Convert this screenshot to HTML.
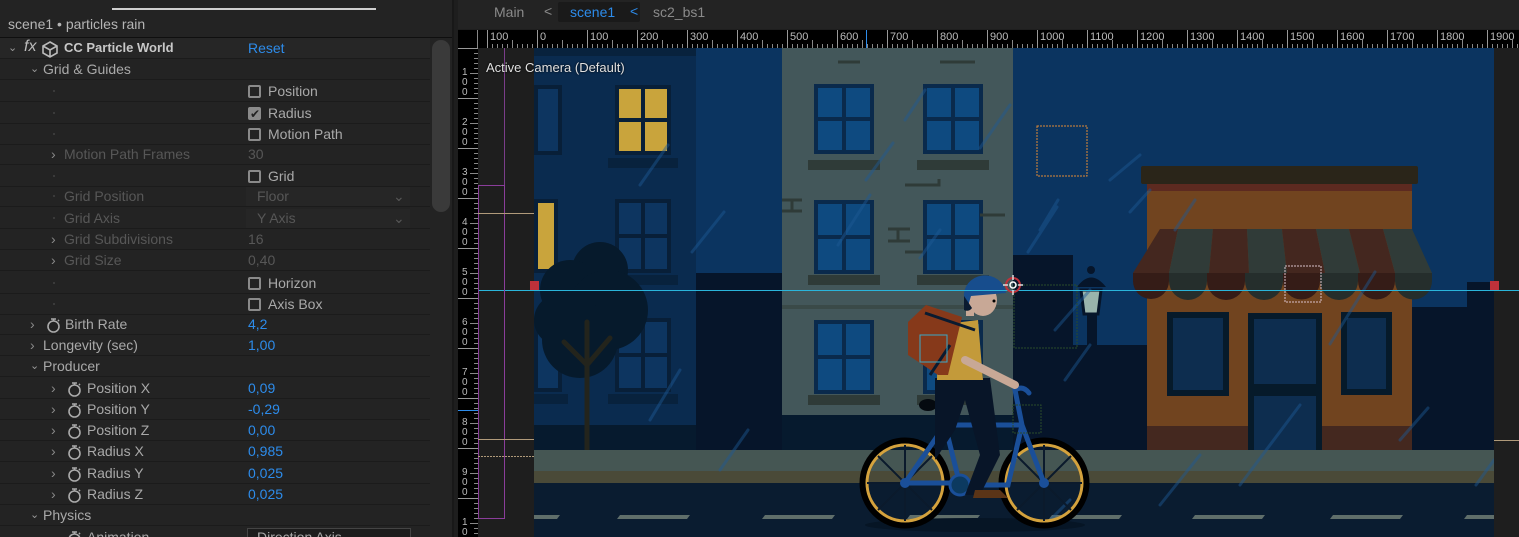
<!DOCTYPE html>
<html><head><meta charset="utf-8"><style>
*{margin:0;padding:0;box-sizing:border-box}
html{width:1519px;height:537px;overflow:hidden}
body{width:1519px;height:537px;overflow:hidden;background:#1e1e1e;font-family:"Liberation Sans","DejaVu Sans",sans-serif;position:relative}
#left{position:absolute;left:0;top:0;width:454px;height:537px;background:#232323;overflow:hidden}
.row{position:absolute;left:0;width:430px;height:21px;border-bottom:1px solid #1b1b1b;font-size:14px;color:#a9a9a9;line-height:20px}
.row span{position:absolute;white-space:nowrap}
.v{left:248px;color:#2d8ceb}
.dim{color:#575757}
.cb{position:absolute;left:248px;top:4px;width:13px;height:13px;border:2px solid #8a8a8a;border-radius:2px}
.dot{position:absolute;left:53px;top:9px;width:2px;height:2px;background:#3a3a3a}
.sw{position:absolute;top:3px;width:15px;height:16px}
.dd{position:absolute;left:246px;top:1px;width:164px;height:19px;background:#262626}
</style></head><body>
<div id="left">
<div style="position:absolute;left:112px;top:8px;width:264px;height:2px;background:#cfcfcf"></div>
<div style="position:absolute;left:8px;top:16px;font-size:14px;color:#b5b5b5">scene1 • particles rain</div>
<div style="position:absolute;left:0;top:37px;width:452px;height:1px;background:#0f0f0f"></div>
<div id="rows"></div>
<div style="position:absolute;left:432px;top:40px;width:18px;height:172px;background:#3a3a3a;border-radius:9px"></div>
<div style="position:absolute;left:452px;top:0;width:6px;height:537px;background:#181818"></div>
</div>

<div style="position:absolute;left:458px;top:0;width:1061px;height:29px;background:#232323"></div>
<div style="position:absolute;left:494px;top:4px;font-size:14px;color:#8a8a8a">Main</div>
<div style="position:absolute;left:544px;top:3px;font-size:14px;color:#8a8a8a">&lt;</div>
<div style="position:absolute;left:558px;top:2px;width:82px;height:20px;background:#1a1a1a;border-radius:2px"></div>
<div style="position:absolute;left:570px;top:4px;font-size:14px;color:#2d8ceb">scene1</div>
<div style="position:absolute;left:630px;top:3px;font-size:14px;color:#2d8ceb">&lt;</div>
<div style="position:absolute;left:653px;top:4px;font-size:14px;color:#8a8a8a">sc2_bs1</div>
<div id="hr" style="position:absolute;left:458px;top:30px;width:1061px;height:18px;background:#000;overflow:hidden"></div>
<div id="vr" style="position:absolute;left:458px;top:48px;width:20px;height:489px;background:#000;overflow:hidden"></div>

<svg style="position:absolute;left:0;top:0" width="1519" height="537" viewBox="0 0 1519 537">
<defs><clipPath id="sc"><rect x="534" y="48" width="960" height="489"/></clipPath></defs>
<g clip-path="url(#sc)">
<rect x="534" y="48" width="960" height="489" fill="#0b3460"/>
<rect x="534" y="48" width="162" height="405" fill="#0a2b4f"/>
<rect x="534" y="48" width="162" height="8" fill="#08223d"/>
<g fill="#0d3560" stroke="#081f38" stroke-width="4">
<rect x="617" y="87" width="52" height="66" fill="#c9a43c"/>
<rect x="536" y="87" width="24" height="66"/>
<rect x="536" y="201" width="20" height="70" fill="#c9a43c"/>
<rect x="617" y="201" width="52" height="70"/>
<rect x="617" y="320" width="52" height="70"/>
<rect x="536" y="320" width="24" height="70"/>
</g>
<line x1="643" y1="87" x2="643" y2="153" stroke="#081f38" stroke-width="4"/><line x1="617" y1="120" x2="669" y2="120" stroke="#081f38" stroke-width="4"/>
<line x1="643" y1="201" x2="643" y2="271" stroke="#081f38" stroke-width="4"/><line x1="617" y1="236" x2="669" y2="236" stroke="#081f38" stroke-width="4"/>
<line x1="643" y1="320" x2="643" y2="390" stroke="#081f38" stroke-width="4"/><line x1="617" y1="355" x2="669" y2="355" stroke="#081f38" stroke-width="4"/>
<g fill="#08223d"><rect x="608" y="158" width="70" height="10"/><rect x="608" y="275" width="70" height="10"/><rect x="608" y="394" width="70" height="10"/><rect x="534" y="394" width="34" height="10"/></g>
<rect x="534" y="425" width="162" height="28" fill="#061a2e"/>
<g fill="#061a2c"><circle cx="600" cy="270" r="28"/><circle cx="570" cy="290" r="30"/><circle cx="608" cy="310" r="40"/><circle cx="580" cy="340" r="38"/><circle cx="560" cy="320" r="26"/></g>
<g stroke="#23241c" stroke-width="5" fill="none" stroke-linecap="round"><path d="M587 322V460M564 342L587 365L610 338"/><path d="M564 462H612"/></g>
<rect x="696" y="273" width="86" height="180" fill="#06152a"/>
<rect x="782" y="48" width="231" height="405" fill="#43575a"/>
<rect x="782" y="415" width="231" height="38" fill="#061a2e"/>
<rect x="782" y="305" width="231" height="4" fill="#3a4a48"/>
<g fill="#0e4a80" stroke="#0a2a4c" stroke-width="4">
<rect x="816" y="86" width="56" height="66"/><rect x="925" y="86" width="56" height="66"/>
<rect x="816" y="202" width="56" height="70"/><rect x="925" y="202" width="56" height="70"/>
<rect x="816" y="322" width="56" height="70"/><rect x="925" y="322" width="56" height="70"/>
</g>
<g stroke="#0a2a4c" stroke-width="4"><path d="M844 86v66M816 119h56M953 86v66M925 119h56M844 202v70M816 237h56M953 202v70M925 237h56M844 322v70M816 357h56M953 322v70M925 357h56"/></g>
<g fill="#2f3b38"><rect x="808" y="160" width="72" height="10"/><rect x="917" y="160" width="72" height="10"/><rect x="808" y="275" width="72" height="10"/><rect x="917" y="275" width="72" height="10"/><rect x="808" y="395" width="72" height="10"/><rect x="917" y="395" width="72" height="10"/></g>
<g stroke="#2f3b38" stroke-width="3" fill="none"><path d="M838 62h22M940 62h35M905 185h34v-6M782 200h20M782 211h20M792 200v11M888 229h22M888 241h22M898 229v12M905 252h18M980 215h25M920 313h20M920 325h20M930 313v12"/></g>
<rect x="1013" y="255" width="60" height="198" fill="#06152a"/>
<rect x="1073" y="345" width="75" height="108" fill="#06152a"/>
<rect x="1412" y="307" width="82" height="146" fill="#06152a"/>
<rect x="1467" y="282" width="27" height="60" fill="#06152a"/>
<rect x="1087" y="305" width="10" height="155" fill="#06152a"/>
<rect x="1083" y="455" width="18" height="6" fill="#06152a"/>
<path d="M1077 287Q1091 268 1106 287Z" fill="#06152a"/><circle cx="1091" cy="270" r="4" fill="#06152a"/>
<path d="M1081 290h20l-3 24h-14z" fill="#9ab4ac" stroke="#06152a" stroke-width="3"/>
<rect x="1147" y="182" width="265" height="271" fill="#71441f"/>
<rect x="1141" y="166" width="277" height="18" rx="2" fill="#2a2519"/>
<rect x="1147" y="184" width="265" height="7" fill="#5c2a20"/>
<rect x="1147" y="426" width="265" height="27" fill="#44281f"/>
<g>
<path d="M1160 229h18l-9 44h-36z" fill="#44271f"/>
<path d="M1178 229h35l-4 44h-40z" fill="#303b38"/>
<path d="M1213 229h34l2 44h-40z" fill="#44271f"/>
<path d="M1247 229h35l5 44h-38z" fill="#303b38"/>
<path d="M1282 229h34l9 44h-38z" fill="#44271f"/>
<path d="M1316 229h33l11 44h-35z" fill="#303b38"/>
<path d="M1349 229h34l12 44h-35z" fill="#44271f"/>
<path d="M1383 229h29l20 44h-37z" fill="#303b38"/>
<path d="M1133 273h36v8a18 18 0 0 1-36 0z" fill="#351c17"/>
<path d="M1169 273h38v8a19 19 0 0 1-38 0z" fill="#252e2c"/>
<path d="M1207 273h38v8a19 19 0 0 1-38 0z" fill="#351c17"/>
<path d="M1245 273h38v8a19 19 0 0 1-38 0z" fill="#252e2c"/>
<path d="M1283 273h37v8a18 18 0 0 1-37 0z" fill="#351c17"/>
<path d="M1320 273h38v8a19 19 0 0 1-38 0z" fill="#252e2c"/>
<path d="M1358 273h37v8a18 18 0 0 1-37 0z" fill="#351c17"/>
<path d="M1395 273h37v8a18 18 0 0 1-37 0z" fill="#252e2c"/>
</g>
<g fill="#0d2d4f" stroke="#061a2a" stroke-width="6"><rect x="1170" y="315" width="56" height="78"/><rect x="1344" y="315" width="45" height="77"/><rect x="1251" y="316" width="68" height="140"/></g>
<rect x="1251" y="384" width="68" height="12" fill="#061a2a"/>
<rect x="534" y="450" width="960" height="21" fill="#455653"/>
<rect x="534" y="471" width="960" height="12" fill="#4a4a38"/>
<rect x="534" y="483" width="960" height="54" fill="#0a1c30"/>
<g fill="#5f6e6a"><path d="M534 515h26l-3 4h-23zM620 515h70l-3 4h-70zM765 515h70l-3 4h-70zM910 515h70l-3 4h-70zM1052 515h70l-3 4h-70zM1195 515h70l-3 4h-70zM1333 515h70l-3 4h-70zM1467 515h27v4h-30z"/></g>
<g stroke="#1e5a96" stroke-width="3" stroke-linecap="round" opacity="0.45">
<path d="M640 185L668 145M692 252L724 212M650 420L680 370M720 470L748 430M838 245L870 195M866 180L893 143M920 258L940 230M980 148L1010 105M1028 252L1057 207M1055 330L1090 290M1040 230L1058 200M1160 505L1200 455M1240 485L1300 405M1330 344L1375 272M1400 440L1428 408M1476 485L1494 460M905 120L925 90M1110 180L1140 155M1175 230L1195 200M1130 212L1150 190M1045 525L1070 500M1065 380L1090 345"/>
</g>
<ellipse cx="975" cy="525" rx="110" ry="7" fill="#061525"/>
<g fill="none" stroke="#000" stroke-width="7"><circle cx="905" cy="483" r="42"/><circle cx="1044" cy="483" r="42"/></g>
<g fill="none" stroke="#d4a23d" stroke-width="3"><circle cx="905" cy="483" r="38"/><circle cx="1044" cy="483" r="38"/></g>
<g stroke="#0b1a2c" stroke-width="2"><path d="M905 445v76M867 483h76M878 456l54 54M932 456l-54 54M1044 445v76M1006 483h76M1017 456l54 54M1071 456l-54 54"/></g>
<g stroke="#1a4f99" stroke-width="5" fill="none" stroke-linecap="round"><path d="M905 483L945 425H1022L1044 483M945 425L960 485H1008L1022 425M905 483H960M1022 425L1015 390q8 -5 14 3"/></g>
<circle cx="960" cy="485" r="10" fill="#0c3a60" stroke="#1a4f99" stroke-width="3"/>
<circle cx="905" cy="483" r="5" fill="#1a4f99"/><circle cx="1044" cy="483" r="5" fill="#1a4f99"/>
<ellipse cx="928" cy="405" rx="9" ry="6" fill="#050a10"/>
<path d="M935 378L990 378L1000 455L980 495L965 495L980 455L965 400L955 430L935 460Z" fill="#081528"/>
<path d="M975 490h25l8 8h-35z" fill="#5a3417"/>
<path d="M938 325l40 -5 5 60l-46 0z" fill="#c39a3a"/>
<path d="M965 360L1015 385" stroke="#c8a896" stroke-width="8" stroke-linecap="round"/>
<path d="M908 322l18 -17 36 12 -14 58 -10 0 -30 -20z" fill="#86391a"/>
<path d="M925 313L975 330M950 345L930 375" stroke="#0a1b30" stroke-width="3"/>
<rect x="966" y="302" width="8" height="14" fill="#c8a896"/>
<ellipse cx="983" cy="300" rx="14" ry="16" fill="#c8a896"/>
<path d="M964 298a21 20 0 0 1 42 -5l-35 3l-3 10z" fill="#174d8d"/>
<path d="M964 296v14a6 6 0 0 0 8 -2z" fill="#0a1b30"/>
<circle cx="994" cy="301" r="1.5" fill="#000"/>
<rect x="920" y="335" width="27" height="27" fill="none" stroke="#3aa9c8" stroke-width="1"/>
<rect x="1037" y="126" width="50" height="50" fill="none" stroke="#e08a36" stroke-dasharray="2 1"/>
<rect x="1285" y="266" width="36" height="36" fill="none" stroke="#d9c0c8" stroke-dasharray="2 1"/>
<rect x="1014" y="285" width="63" height="63" fill="none" stroke="#2a4a2a" stroke-dasharray="2 1"/>
<rect x="1013" y="405" width="28" height="28" fill="none" stroke="#2a4a2a" stroke-dasharray="2 1"/>
</g>
<line x1="478" y1="290.5" x2="1519" y2="290.5" stroke="#2ab5db" stroke-width="1"/>
<rect x="530" y="281" width="9" height="9" fill="#c0313a"/>
<rect x="1490" y="281" width="9" height="9" fill="#c0313a"/>
<g transform="translate(1013 285)"><circle r="7" fill="none" stroke="#c0313a" stroke-width="2"/><circle r="3" fill="none" stroke="#fff" stroke-width="1.5"/><path d="M-10 0h5M5 0h5M0 -10v5M0 5v5" stroke="#ddd" stroke-width="1.5"/></g>
<line x1="504.5" y1="48" x2="504.5" y2="460" stroke="#7a3d8a"/>
<rect x="478.5" y="185.5" width="26" height="333" fill="none" stroke="#8a3d9a"/>
<g stroke="#b09a7a"><line x1="478" y1="213.5" x2="534" y2="213.5"/><line x1="478" y1="439.5" x2="534" y2="439.5"/><line x1="478" y1="456.5" x2="534" y2="456.5" stroke-dasharray="2 1"/><line x1="1494" y1="440.5" x2="1519" y2="440.5"/></g>
</svg>

<div style="position:absolute;left:486px;top:60px;font-size:13px;color:#e0e0e0;text-shadow:0 0 2px #000">Active Camera (Default)</div>

<script>
var rows=[
[48,'<span style="left:8px;color:#999;font-size:11px">&#8964;</span><span style="left:24px;font-style:italic;color:#bbb;font-size:16px;top:-1px">fx</span><svg style="position:absolute;left:41px;top:2px" width="18" height="18" viewBox="0 0 18 18" fill="none" stroke="#bbb" stroke-width="1.6"><path d="M9 2l7 4v7l-7 4-7-4V6zM2 6l7 4 7-4M9 10v7"/></svg><span style="left:64px;font-weight:bold;color:#c8c8c8;font-size:13px">CC Particle World</span><span class="v">Reset</span>',1],
[69,'<span style="left:30px;color:#999;font-size:11px">&#8964;</span><span style="left:43px">Grid &amp; Guides</span>'],
[91,'<i class="dot"></i><i class="cb"></i><span style="left:268px">Position</span>'],
[113,'<i class="dot"></i><i class="cb" style="background:#8a8a8a"></i><span style="left:250px;color:#222;font-size:12px;top:1px">&#10004;</span><span style="left:268px">Radius</span>'],
[134,'<i class="dot"></i><i class="cb"></i><span style="left:268px">Motion Path</span>'],
[154,'<span style="left:51px;color:#8a8a8a">&#8250;</span><span class="dim" style="left:64px">Motion Path Frames</span><span class="dim" style="left:248px">30</span>'],
[176,'<i class="dot"></i><i class="cb"></i><span style="left:268px">Grid</span>'],
[196,'<i class="dot"></i><i class="dd"></i><span class="dim" style="left:64px">Grid Position</span><span class="dim" style="left:257px">Floor</span><span class="dim" style="left:393px">&#8964;</span>'],
[218,'<i class="dot"></i><i class="dd"></i><span class="dim" style="left:64px">Grid Axis</span><span class="dim" style="left:257px">Y Axis</span><span class="dim" style="left:393px">&#8964;</span>'],
[239,'<span style="left:51px;color:#8a8a8a">&#8250;</span><span class="dim" style="left:64px">Grid Subdivisions</span><span class="dim" style="left:248px">16</span>'],
[260,'<span style="left:51px;color:#8a8a8a">&#8250;</span><span class="dim" style="left:64px">Grid Size</span><span class="dim" style="left:248px">0,40</span>'],
[283,'<i class="dot"></i><i class="cb"></i><span style="left:268px">Horizon</span>'],
[304,'<i class="dot"></i><i class="cb"></i><span style="left:268px">Axis Box</span>'],
[324,'<span style="left:30px;color:#8a8a8a">&#8250;</span>SW46<span style="left:65px">Birth Rate</span><span class="v">4,2</span>'],
[345,'<span style="left:30px;color:#8a8a8a">&#8250;</span><span style="left:43px">Longevity (sec)</span><span class="v">1,00</span>'],
[366,'<span style="left:30px;color:#999;font-size:11px">&#8964;</span><span style="left:43px">Producer</span>'],
[388,'<span style="left:51px;color:#8a8a8a">&#8250;</span>SW67<span style="left:87px">Position X</span><span class="v">0,09</span>'],
[409,'<span style="left:51px;color:#8a8a8a">&#8250;</span>SW67<span style="left:87px">Position Y</span><span class="v">-0,29</span>'],
[430,'<span style="left:51px;color:#8a8a8a">&#8250;</span>SW67<span style="left:87px">Position Z</span><span class="v">0,00</span>'],
[451,'<span style="left:51px;color:#8a8a8a">&#8250;</span>SW67<span style="left:87px">Radius X</span><span class="v">0,985</span>'],
[473,'<span style="left:51px;color:#8a8a8a">&#8250;</span>SW67<span style="left:87px">Radius Y</span><span class="v">0,025</span>'],
[494,'<span style="left:51px;color:#8a8a8a">&#8250;</span>SW67<span style="left:87px">Radius Z</span><span class="v">0,025</span>'],
[515,'<span style="left:30px;color:#999;font-size:11px">&#8964;</span><span style="left:43px">Physics</span>'],
[537,'SW67<span style="left:87px">Animation</span><i class="dd" style="left:247px;border:1px solid #444;background:#1c1c1c;height:22px"></i><span style="left:257px">Direction Axis</span><span style="left:404px;color:#999">&#8964;</span>']
];
function sw(x){return '<svg class="sw" style="left:'+x+'px" viewBox="0 0 15 16" fill="none" stroke="#aaa" stroke-width="1.6"><circle cx="7.5" cy="9.5" r="5.5"/><path d="M5 2h5M7.5 2v2M12 4l1 -1"/></svg>';}
var h='';rows.forEach(function(r){var top=r[0]-10;var s=r[1].replace('SW46',sw(46)).replace('SW67',sw(67));
h+='<div class="row" style="top:'+top+'px'+(r[2]?';background:#262626':'')+'">'+s+'</div>';});
document.getElementById('rows').innerHTML=h;
var hr=document.getElementById('hr'),s='';
for(var k=-1;k<=19;k++){var x=537+k*50-458;
s+='<div style="position:absolute;left:'+x+'px;top:0;width:1px;height:18px;background:#999"></div>';
s+='<div style="position:absolute;left:'+(x+3)+'px;top:1px;font-size:11px;color:#bbb">'+Math.abs(k*100)+'</div>';
for(var j=1;j<10;j++){s+='<div style="position:absolute;left:'+(x+j*5)+'px;top:'+(j==5?10:14)+'px;width:1px;height:'+(j==5?8:4)+'px;background:#888"></div>';}}
s+='<div style="position:absolute;left:0;top:0;width:20px;height:18px;background:#000;border-right:1px solid #888"></div><div style="position:absolute;left:408px;top:0;width:1px;height:18px;background:#2d8ceb"></div>';
hr.innerHTML=s;
var vr=document.getElementById('vr');s='';
for(var n=0;n<=10;n++){var y=n*50;
s+='<div style="position:absolute;left:0;top:'+y+'px;width:20px;height:1px;background:#999"></div>';
if(n>0){var t=String(n*100).split('').join('<br>');s+='<div style="position:absolute;left:4px;top:'+(y-30)+'px;font-size:10px;line-height:10px;color:#bbb">'+t+'</div>';}
for(var j=1;j<10;j++)s+='<div style="position:absolute;left:'+(j==5?12:16)+'px;top:'+(y+j*5)+'px;height:1px;width:'+(j==5?8:4)+'px;background:#888"></div>';}
s+='<div style="position:absolute;left:0;top:362px;width:20px;height:1px;background:#2d8ceb"></div>';
vr.innerHTML=s;
</script>
</body></html>
